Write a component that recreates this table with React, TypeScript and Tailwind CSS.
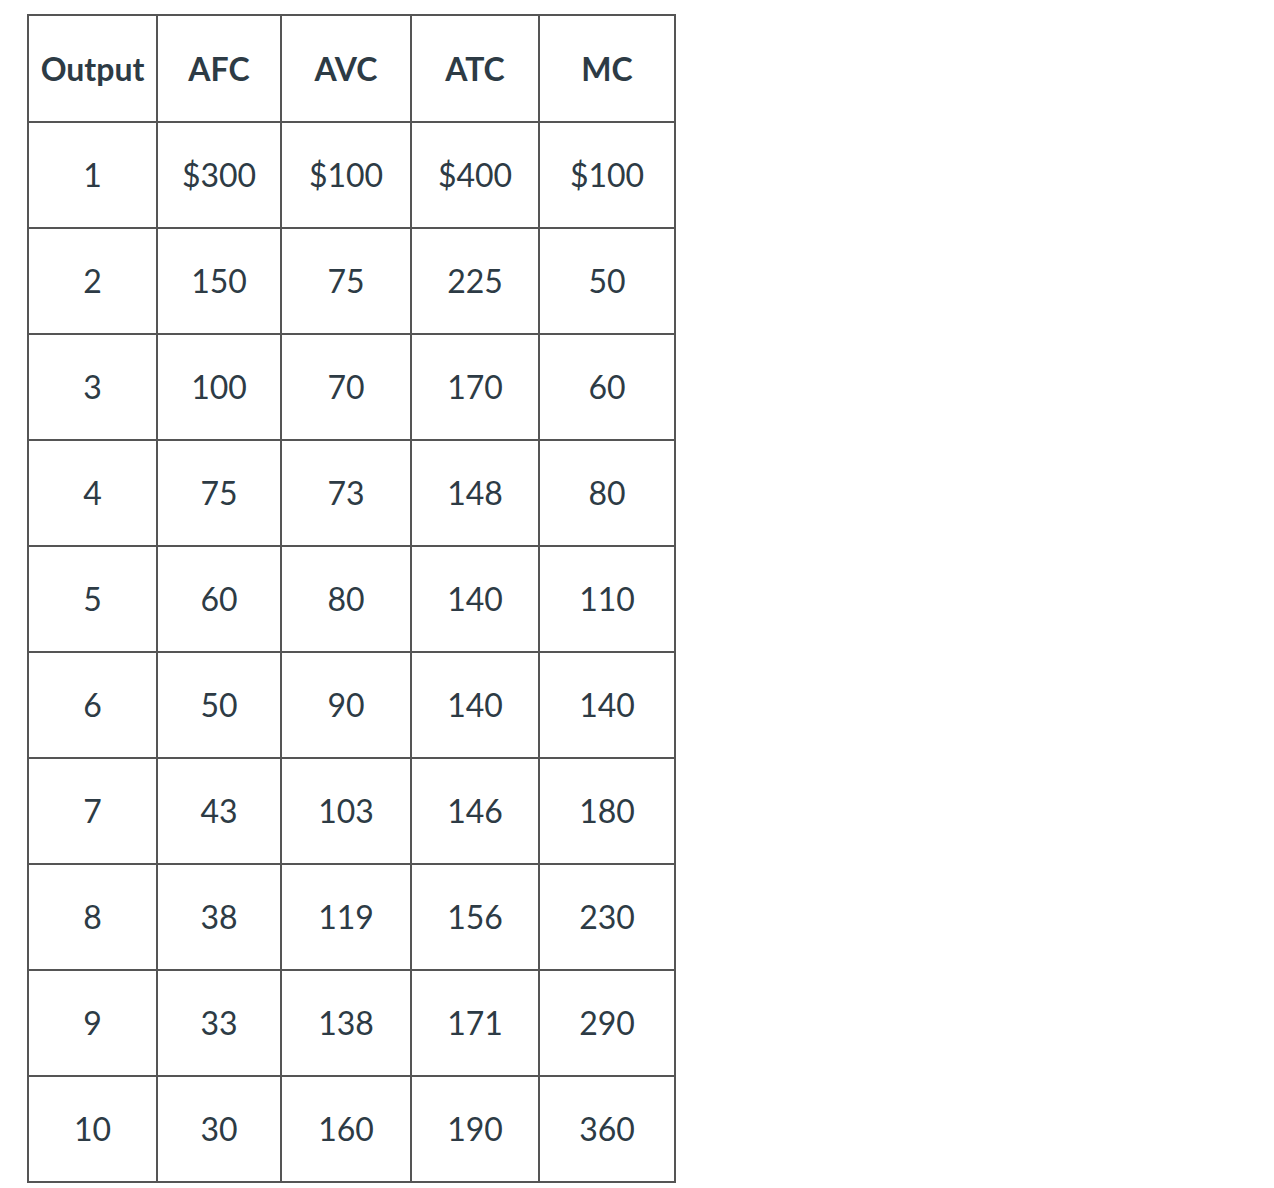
const headers = ['Output', 'AFC', 'AVC', 'ATC', 'MC'];
const widths = ['w-[129px]', 'w-[124px]', 'w-[130px]', 'w-[128px]', 'w-[136px]'];

const rows = [
  ['1', '$300', '$100', '$400', '$100'],
  ['2', '150', '75', '225', '50'],
  ['3', '100', '70', '170', '60'],
  ['4', '75', '73', '148', '80'],
  ['5', '60', '80', '140', '110'],
  ['6', '50', '90', '140', '140'],
  ['7', '43', '103', '146', '180'],
  ['8', '38', '119', '156', '230'],
  ['9', '33', '138', '171', '290'],
  ['10', '30', '160', '190', '360'],
];

export default function App() {
  return (
    <div className="min-h-screen bg-white pt-[14px] pl-[27px] font-['Lato','Liberation_Sans',sans-serif] text-[#2d3b45]">
      <table className="border-collapse table-fixed text-[32px] leading-none">
        <thead>
          <tr>
            {headers.map((h, i) => (
              <th
                key={h}
                className={`${widths[i]} h-[107px] border-2 border-[#555] text-center font-bold p-0`}
              >
                {h}
              </th>
            ))}
          </tr>
        </thead>
        <tbody>
          {rows.map((r) => (
            <tr key={r[0]}>
              {r.map((c, i) => (
                <td
                  key={i}
                  className="h-[106px] border-2 border-[#555] text-center font-normal p-0"
                >
                  {c}
                </td>
              ))}
            </tr>
          ))}
        </tbody>
      </table>
    </div>
  );
}
